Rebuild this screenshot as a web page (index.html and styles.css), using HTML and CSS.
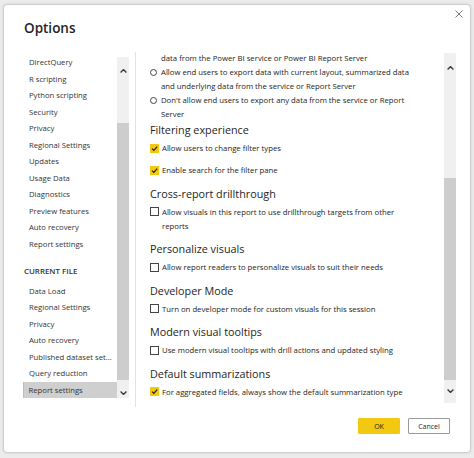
FILE: index.html
```html
<!DOCTYPE html>
<html lang="en">
<head>
<meta charset="utf-8">
<title>Options</title>
<link rel="stylesheet" href="styles.css">
</head>
<body>
<div class="dialog">
  <div class="header">
    <h1 class="title">Options</h1>
    <button class="close" aria-label="Close">
      <svg viewBox="0 0 8 8" width="8" height="8"><path d="M0.5 0.5 L7.5 7.5 M7.5 0.5 L0.5 7.5"/></svg>
    </button>
  </div>
  <div class="body">
    <nav class="nav">
      <ul class="nav-list">
        <li>DirectQuery</li>
        <li>R scripting</li>
        <li>Python scripting</li>
        <li>Security</li>
        <li>Privacy</li>
        <li>Regional Settings</li>
        <li>Updates</li>
        <li>Usage Data</li>
        <li>Diagnostics</li>
        <li>Preview features</li>
        <li>Auto recovery</li>
        <li>Report settings</li>
      </ul>
      <div class="nav-section">CURRENT FILE</div>
      <ul class="nav-list">
        <li>Data Load</li>
        <li>Regional Settings</li>
        <li>Privacy</li>
        <li>Auto recovery</li>
        <li>Published dataset set...</li>
        <li>Query reduction</li>
        <li class="selected">Report settings</li>
      </ul>
    </nav>
    <div class="scrollbar nav-scroll">
      <div class="sb-btn sb-up-nav"><svg viewBox="0 0 7 4" width="7" height="4"><path d="M0.6 3.5 L3.5 0.6 L6.4 3.5"/></svg></div>
      <div class="sb-space nav-space"></div>
      <div class="sb-thumb"></div>
      <div class="sb-btn sb-down-nav"><svg viewBox="0 0 7 4" width="7" height="4"><path d="M0.6 0.5 L3.5 3.4 L6.4 0.5"/></svg></div>
    </div>
    <div class="divider"></div>
    <div class="content">
      <div class="radio-cont">data from the Power BI service or Power BI Report Server</div>
      <label class="radio"><span class="radio-dot"></span><span class="opt-text">Allow end users to export data with current layout, summarized data<br>and underlying data from the service or Report Server</span></label>
      <label class="radio"><span class="radio-dot"></span><span class="opt-text">Don't allow end users to export any data from the service or Report<br>Server</span></label>

      <section class="group">
        <h2 class="group-title">Filtering experience</h2>
        <div class="items">
          <label class="check"><span class="box checked"><svg viewBox="0 0 9 9" width="9" height="9"><path d="M2 4.6 L3.8 6.4 L7.2 2.6"/></svg></span><span class="opt-text">Allow users to change filter types</span></label>
          <label class="check"><span class="box checked"><svg viewBox="0 0 9 9" width="9" height="9"><path d="M2 4.6 L3.8 6.4 L7.2 2.6"/></svg></span><span class="opt-text">Enable search for the filter pane</span></label>
        </div>
      </section>

      <section class="group">
        <h2 class="group-title">Cross-report drillthrough</h2>
        <div class="items">
          <label class="check"><span class="box"></span><span class="opt-text">Allow visuals in this report to use drillthrough targets from other<br>reports</span></label>
        </div>
      </section>

      <section class="group">
        <h2 class="group-title">Personalize visuals</h2>
        <div class="items">
          <label class="check"><span class="box"></span><span class="opt-text">Allow report readers to personalize visuals to suit their needs</span></label>
        </div>
      </section>

      <section class="group">
        <h2 class="group-title">Developer Mode</h2>
        <div class="items">
          <label class="check"><span class="box"></span><span class="opt-text">Turn on developer mode for custom visuals for this session</span></label>
        </div>
      </section>

      <section class="group">
        <h2 class="group-title">Modern visual tooltips</h2>
        <div class="items">
          <label class="check"><span class="box"></span><span class="opt-text">Use modern visual tooltips with drill actions and updated styling</span></label>
        </div>
      </section>

      <section class="group">
        <h2 class="group-title">Default summarizations</h2>
        <div class="items">
          <label class="check"><span class="box checked"><svg viewBox="0 0 9 9" width="9" height="9"><path d="M2 4.6 L3.8 6.4 L7.2 2.6"/></svg></span><span class="opt-text">For aggregated fields, always show the default summarization type</span></label>
        </div>
      </section>
    </div>
    <div class="scrollbar content-scroll">
      <div class="sb-btn sb-up-content"><svg viewBox="0 0 7 4" width="7" height="4"><path d="M0.6 3.5 L3.5 0.6 L6.4 3.5"/></svg></div>
      <div class="sb-space content-space"></div>
      <div class="sb-thumb"></div>
      <div class="sb-btn sb-down-content"><svg viewBox="0 0 7 4" width="7" height="4"><path d="M0.6 0.5 L3.5 3.4 L6.4 0.5"/></svg></div>
    </div>
  </div>
  <div class="footer">
    <button class="btn btn-primary">OK</button>
    <button class="btn btn-secondary">Cancel</button>
  </div>
</div>
</body>
</html>
```

FILE: styles.css
```css
* { box-sizing: border-box; }

html, body {
  margin: 0;
  padding: 0;
}

body {
  width: 474px;
  height: 458px;
  overflow: hidden;
  background: #ececec;
  font-family: "Open Sans", "Noto Sans", sans-serif;
  color: #252423;
  padding-top: 4px;
  padding-left: 3px;
}

.dialog {
  width: 468px;
  height: 449px;
  background: #ffffff;
  border: 1px solid #cfcfcf;
  border-radius: 4px;
  box-shadow: 0 0 3px rgba(0, 0, 0, 0.12);
  display: flex;
  flex-direction: column;
}

/* header */
.header {
  height: 46px;
  display: flex;
  justify-content: space-between;
  align-items: flex-start;
  padding: 0 7px 0 20px;
  flex: none;
}

.title {
  margin: 13px 0 0;
  font-size: 13.5px;
  line-height: 20px;
  font-weight: 600;
  color: #252423;
}

.close {
  margin-top: 5px;
  width: 8px;
  height: 8px;
  padding: 0;
  border: 0;
  background: none;
  display: flex;
}

.close svg path {
  stroke: #6b6b6b;
  stroke-width: 0.9;
  fill: none;
}

/* body */
.body {
  height: 356px;
  flex: none;
  display: flex;
  padding: 0 14px 0 19px;
}

.nav {
  width: 94px;
  flex: none;
  padding-top: 3px;
}

.nav-list {
  list-style: none;
  margin: 0;
  padding: 0;
}

.nav-list li {
  height: 16.5px;
  line-height: 16.5px;
  font-size: 7.7px;
  color: #333333;
  padding-left: 6px;
  white-space: nowrap;
  overflow: hidden;
}

.nav-list li.selected {
  background: #cfcfcf;
  border-left: 1.5px solid #e8c33a;
  padding-left: 4.5px;
}

.nav-section {
  margin: 10.5px 0 3.75px;
  height: 16.5px;
  line-height: 16.5px;
  font-size: 7.9px;
  font-weight: 600;
  color: #333333;
  padding-left: 1px;
}

/* scrollbars */
.scrollbar {
  width: 12px;
  flex: none;
  background: #f0f0f0;
  display: flex;
  flex-direction: column;
}

.sb-btn {
  display: flex;
  align-items: center;
  justify-content: center;
  flex: none;
}

.sb-btn svg path {
  stroke: #3a3a3a;
  stroke-width: 1.4;
  fill: none;
}

.sb-thumb {
  flex: 1;
  background: #cdcdcd;
}

.sb-space { flex: none; }

.nav-scroll {
  margin-top: 6px;
  height: 341px;
}

.sb-up-nav { height: 28px; }
.nav-space { height: 38px; }
.sb-down-nav { height: 18px; padding-top: 7px; }

.content-scroll {
  margin-top: 2px;
  height: 350px;
}

.sb-up-content { height: 30px; }
.content-space { height: 95px; }
.sb-down-content { height: 23px; padding-bottom: 1px; }

.divider {
  width: 1px;
  flex: none;
  margin: 1px 0 0 6px;
  height: 355px;
  background: #e3e3e3;
}

/* content */
.content {
  flex: 1;
  min-width: 0;
  padding-left: 14px;
  font-size: 7.75px;
  line-height: 14px;
  color: #252423;
  overflow: hidden;
}

.opt-text {
  white-space: nowrap;
}

.radio-cont {
  padding-left: 11px;
  white-space: nowrap;
}

.radio {
  display: flex;
  align-items: flex-start;
  gap: 4px;
}

.radio-dot {
  flex: none;
  width: 7px;
  height: 7px;
  margin-top: 3.5px;
  border: 1px solid #444444;
  border-radius: 50%;
  background: #ffffff;
}

.group + .group {
  margin-top: 7.5px;
}

.group-title {
  margin: 0 0 2px;
  font-size: 10.8px;
  line-height: 18px;
  font-weight: 400;
  color: #252423;
  white-space: nowrap;
}

.items {
  display: flex;
  flex-direction: column;
  gap: 8px;
}

.check {
  display: flex;
  align-items: flex-start;
  gap: 3px;
}

.box {
  flex: none;
  width: 9px;
  height: 9px;
  margin-top: 2.5px;
  border: 1px solid #444444;
  background: #ffffff;
  display: flex;
}

.box.checked {
  border: 0;
  background: #f2c811;
}

.box svg path {
  stroke: #252423;
  stroke-width: 1.3;
  fill: none;
}

/* footer */
.footer {
  flex: 1;
  display: flex;
  justify-content: flex-end;
  align-items: flex-start;
  gap: 8px;
  padding: 11px 20px 0 0;
}

.btn {
  width: 42px;
  height: 16px;
  padding: 0;
  font-family: "Open Sans", "Noto Sans", sans-serif;
  font-size: 7px;
  color: #252423;
  border-radius: 1px;
}

.btn-primary {
  background: #f2c811;
  border: 1px solid #f2c811;
}

.btn-secondary {
  background: #ffffff;
  border: 1px solid #9a9a9a;
}
```
